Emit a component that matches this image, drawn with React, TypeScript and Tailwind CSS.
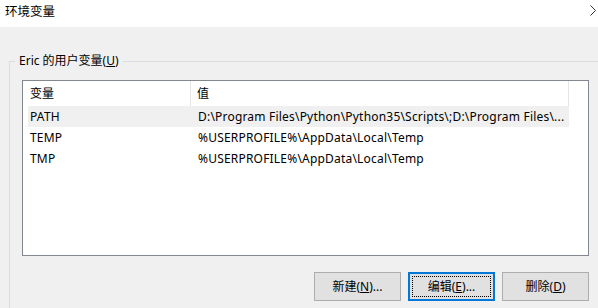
import React from "react";

const font = { fontFamily: '"Noto Sans", "Noto Sans CJK SC", sans-serif' };

function Btn({ label, keyChar, suffix, focused }: { label: string; keyChar: string; suffix: string; focused?: boolean }) {
  return (
    <div
      className={
        "w-[87px] h-[29px] flex items-center justify-center bg-[#e1e1e1] text-[12px] text-black " +
        (focused ? "border-2 border-[#0078d7]" : "border border-[#adadad]")
      }
    >
      <div
        className={
          "flex items-center justify-center " +
          (focused ? "w-[79px] h-[21px] border border-dotted border-black" : "")
        }
      >
        <span>
          {label}(<span className="underline">{keyChar}</span>){suffix}
        </span>
      </div>
    </div>
  );
}

export default function App() {
  const rows = [
    { name: "PATH", value: "D:\\Program Files\\Python\\Python35\\Scripts\\;D:\\Program Files\\...", sel: true },
    { name: "TEMP", value: "%USERPROFILE%\\AppData\\Local\\Temp" },
    { name: "TMP", value: "%USERPROFILE%\\AppData\\Local\\Temp" },
  ];
  return (
    <div className="w-[598px] h-[308px] overflow-hidden bg-[#f0f0f0] flex flex-col text-black" style={font}>
      <div className="h-[27px] bg-white flex items-start justify-between shrink-0">
        <span className="text-[12.5px] pl-[5px] pt-[3px] leading-[18px]">环境变量</span>
        <svg width="8" height="14" viewBox="0 0 8 14" className="mt-[4px] mr-[1px]">
          <polyline points="1.5,1.5 6.5,6.5 1.5,11.5" fill="none" stroke="#333" strokeWidth="1" />
        </svg>
      </div>
      <div className="pl-[9px] pt-[34px]">
        <div className="relative w-[620px] h-[400px] border-l border-t border-[#dcdcdc] pl-[12px] pt-[18px]">
          <span className="absolute left-[5px] top-[-9px] bg-[#f0f0f0] px-[4px] text-[12px] leading-[16px]">
            Eric 的用户变量(<span className="underline">U</span>)
          </span>
          <div className="w-[567px] flex flex-col">
            <div className="h-[176px] border border-[#828790] bg-white text-[12px]">
              <div className="flex h-[25px] w-[546px] items-center">
                <div className="w-[168px] h-full flex items-center pl-[7px] border-r border-[#e5e5e5]">变量</div>
                <div className="flex-1 h-full flex items-center pl-[6px] border-r border-[#e5e5e5]">值</div>
              </div>
              {rows.map((r) => (
                <div
                  key={r.name}
                  className={"flex h-[21px] items-center ml-[5px] w-[541px] tracking-[0.2px] " + (r.sel ? "bg-[#f0f0f0]" : "")}
                >
                  <div className="w-[170px] pl-[2px] whitespace-nowrap">{r.name}</div>
                  <div className="flex-1 whitespace-nowrap overflow-hidden">{r.value}</div>
                </div>
              ))}
            </div>
            <div className="flex justify-end gap-[7px] mt-[16px]">
              <Btn label="新建" keyChar="N" suffix="..." />
              <Btn label="编辑" keyChar="E" suffix="..." focused />
              <Btn label="删除" keyChar="D" suffix="" />
            </div>
          </div>
        </div>
      </div>
    </div>
  );
}
